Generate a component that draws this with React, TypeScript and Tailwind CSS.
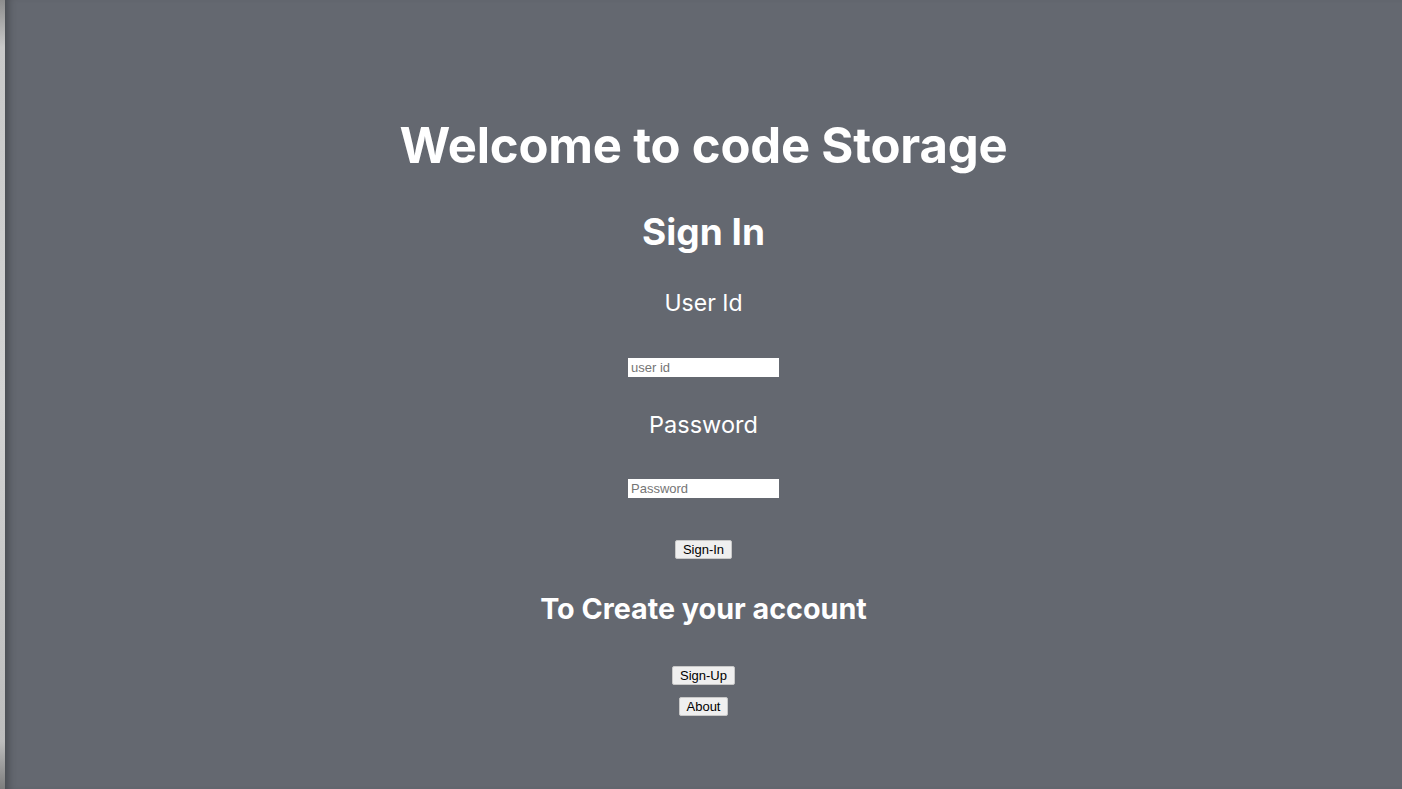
export default function App() {
  return (
    <div className="flex h-[789px] w-[1402px] overflow-hidden bg-[#9a9a9a]">
      {/* desktop strip on the left */}
      <div className="h-full w-[5px] bg-[linear-gradient(180deg,#8d8d8d,#c9c9c9_6%,#d4d4d4_50%,#bdbdbd_94%,#7d7d7d)]" />

      <main className="relative flex flex-1 flex-col items-center bg-[#646870] text-white shadow-[inset_9px_0_8px_-6px_rgba(0,0,0,0.3)] [font-family:Inter,'Noto_Sans',sans-serif]">
        <h1 className="mt-[121px] text-[49px] font-bold leading-none tracking-[-0.2px]">Welcome to code Storage</h1>

        <h2 className="mt-[43px] text-[37px] font-bold leading-none">Sign In</h2>

        <label className="mt-[40px] text-[23px] leading-[26px]">User Id</label>
        <input
          className="mt-[42px] h-[19px] w-[151px] bg-white px-[3px] text-[13px] text-black outline-none placeholder:text-[#757575] [font-family:'Liberation_Sans',Arial,sans-serif]"
          placeholder="user id"
        />

        <label className="mt-[35px] text-[23.5px] leading-[26px]">Password</label>
        <input
          type="password"
          className="mt-[41px] h-[19px] w-[151px] bg-white px-[3px] text-[13px] text-black outline-none placeholder:text-[#757575] [font-family:'Liberation_Sans',Arial,sans-serif]"
          placeholder="Password"
        />

        <button className="mt-[42px] h-[19px] rounded-[2px] border border-[#c8c8c8] bg-[#efefef] px-[7px] text-[13px] leading-none text-black [font-family:'Liberation_Sans',Arial,sans-serif]">
          Sign-In
        </button>

        <h3 className="mt-[35px] text-[28.7px] font-bold leading-[30px]">To Create your account</h3>

        <button className="mt-[42px] h-[19px] rounded-[2px] border border-[#c8c8c8] bg-[#efefef] px-[7px] text-[13px] leading-none text-black [font-family:'Liberation_Sans',Arial,sans-serif]">
          Sign-Up
        </button>
        <button className="mt-[12px] h-[19px] rounded-[2px] border border-[#c8c8c8] bg-[#efefef] px-[7px] text-[13px] leading-none text-black [font-family:'Liberation_Sans',Arial,sans-serif]">
          About
        </button>
      </main>
    </div>
  )
}
